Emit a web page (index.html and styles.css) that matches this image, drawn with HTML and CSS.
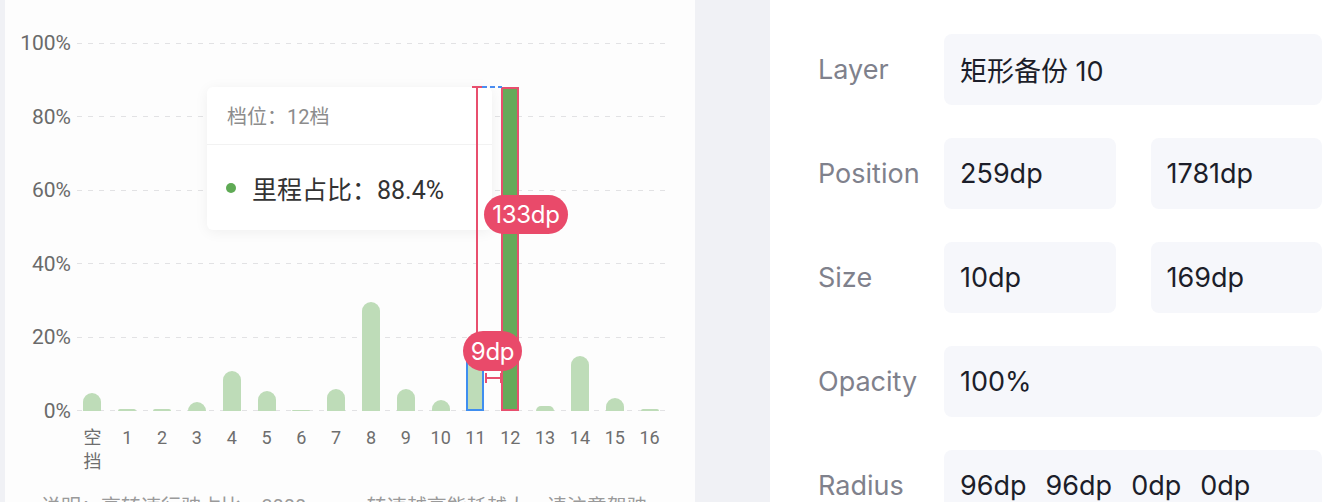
FILE: index.html
```html
<!DOCTYPE html>
<html lang="zh-CN">
<head>
<meta charset="utf-8">
<title>档位分布</title>
<link rel="stylesheet" href="styles.css">
</head>
<body>
<div class="page">
  <section class="chart-panel">
    <div class="chart-area">
      <div class="grid-lines">
        <div class="grid-row"><span class="y-label">100%</span><span class="dash"></span></div>
        <div class="grid-row"><span class="y-label">80%</span><span class="dash"></span></div>
        <div class="grid-row"><span class="y-label">60%</span><span class="dash"></span></div>
        <div class="grid-row"><span class="y-label">40%</span><span class="dash"></span></div>
        <div class="grid-row"><span class="y-label">20%</span><span class="dash"></span></div>
        <div class="grid-row"><span class="y-label">0%</span><span class="dash"></span></div>
      </div>
      <div class="bars">
        <div class="bar" style="height:18px"></div>
        <div class="bar" style="height:2px"></div>
        <div class="bar" style="height:2px"></div>
        <div class="bar" style="height:9px"></div>
        <div class="bar" style="height:40px"></div>
        <div class="bar" style="height:20px"></div>
        <div class="bar" style="height:1px"></div>
        <div class="bar" style="height:22px"></div>
        <div class="bar" style="height:109px"></div>
        <div class="bar" style="height:22px"></div>
        <div class="bar" style="height:11px"></div>
        <div class="bar bar-ref" style="height:69px"></div>
        <div class="bar bar-active" style="height:324px"></div>
        <div class="bar" style="height:5px"></div>
        <div class="bar" style="height:55px"></div>
        <div class="bar" style="height:13px"></div>
        <div class="bar" style="height:2px"></div>
      </div>

      <div class="tooltip">
        <div class="tooltip-head">档位：12档</div>
        <div class="tooltip-body"><span class="dot"></span><span>里程占比：88.4%</span></div>
      </div>

      <div class="measure-v"></div>
      <div class="measure-cap-top"></div>
      <div class="measure-ext"></div>
      <div class="measure-h"></div>
      <div class="badge badge-v">133dp</div>
      <div class="badge badge-h">9dp</div>
    </div>

    <div class="x-labels">
      <span>空<br>挡</span><span>1</span><span>2</span><span>3</span><span>4</span><span>5</span><span>6</span><span>7</span><span>8</span><span>9</span><span>10</span><span>11</span><span>12</span><span>13</span><span>14</span><span>15</span><span>16</span>
    </div>
    <p class="note">说明：高转速行驶占比 ≥ 3000 rpm，转速越高能耗越大，请注意驾驶</p>
  </section>

  <aside class="props">
    <span class="prop-label">Layer</span>
    <div class="field field-wide">矩形备份 10</div>

    <span class="prop-label">Position</span>
    <div class="field">259dp</div>
    <div class="field">1781dp</div>

    <span class="prop-label">Size</span>
    <div class="field">10dp</div>
    <div class="field">169dp</div>

    <span class="prop-label">Opacity</span>
    <div class="field field-wide">100%</div>

    <span class="prop-label">Radius</span>
    <div class="field field-wide field-radius"><span>96dp</span><span>96dp</span><span>0dp</span><span>0dp</span></div>
  </aside>
</div>
</body>
</html>
```

FILE: styles.css
```css
* { box-sizing: border-box; }

html, body {
  margin: 0;
  padding: 0;
  height: 502px;
  overflow: hidden;
  background: #f0f1f5;
  font-family: Roboto, "Noto Sans CJK SC", sans-serif;
}

.page {
  display: flex;
  height: 502px;
  padding-left: 5px;
}

/* ---------- chart panel ---------- */
.chart-panel {
  width: 690px;
  flex: none;
  background: #fdfdfd;
  padding-top: 33px;
  margin-right: 75px;
  overflow: hidden;
}

.chart-area {
  position: relative;
  display: grid;
  height: 388px;
}

.grid-lines, .bars { grid-area: 1 / 1; }

.grid-lines {
  display: flex;
  flex-direction: column;
  justify-content: space-between;
}

.grid-row {
  height: 20px;
  display: flex;
  align-items: center;
}

.y-label {
  width: 66px;
  text-align: right;
  font-size: 21px;
  line-height: 20px;
  color: #6a6a6a;
}

.dash {
  margin-left: 6px;
  width: 590px;
  height: 1px;
  background: repeating-linear-gradient(90deg, #e2e2e4 0 5px, transparent 5px 11px);
}

.bars {
  margin-left: 70px;
  width: 592px;
  display: grid;
  grid-template-columns: repeat(17, 1fr);
  align-items: end;
  padding-bottom: 10px;
}

.bar {
  width: 18px;
  justify-self: center;
  background: #bedcb8;
  border-radius: 9px 9px 0 0;
}

.bar-ref {
  border: 2px solid #3f8ef0;
  border-radius: 0;
}

.bar-active {
  background: #66aa5a;
  border: 2px solid #e84f6e;
  border-radius: 0;
}

/* tooltip */
.tooltip {
  position: absolute;
  left: 202px;
  top: 54px;
  width: 285px;
  height: 143px;
  background: #fff;
  border-radius: 6px;
  box-shadow: 0 2px 14px rgba(0, 0, 0, 0.06);
  display: flex;
  flex-direction: column;
}

.tooltip-head {
  height: 58px;
  padding: 0 0 0 20px;
  display: flex;
  align-items: center;
  font-size: 20px;
  color: #8c8c8c;
  border-bottom: 1px solid #f2f2f2;
}

.tooltip-body {
  flex: 1;
  display: flex;
  align-items: center;
  padding-left: 19px;
  gap: 16px;
  font-size: 25px;
  color: #333;
}

.dot {
  width: 10px;
  height: 10px;
  border-radius: 50%;
  background: #5faa55;
}

/* measurement overlay */
.measure-v {
  position: absolute;
  left: 471px;
  top: 54px;
  width: 2px;
  height: 255px;
  background: #e84f6e;
}

.measure-cap-top {
  position: absolute;
  left: 467px;
  top: 53px;
  width: 10px;
  height: 2px;
  background: #e84f6e;
}

.measure-ext {
  position: absolute;
  left: 477px;
  top: 53px;
  width: 20px;
  height: 2px;
  background: repeating-linear-gradient(90deg, #4a8cf0 0 5px, transparent 5px 8px);
}

.measure-h {
  position: absolute;
  left: 480px;
  top: 340px;
  width: 17px;
  height: 10px;
  border-left: 2px solid #e84f6e;
  border-right: 2px solid #e84f6e;
  background: linear-gradient(#e84f6e, #e84f6e) center / 100% 2px no-repeat;
}

.badge {
  position: absolute;
  display: flex;
  align-items: center;
  justify-content: center;
  background: #e94a6a;
  color: #fff;
  font-family: Inter, Roboto, sans-serif;
  font-size: 24px;
  letter-spacing: -0.3px;
  border-radius: 20px;
}

.badge-v {
  left: 479px;
  top: 162px;
  width: 84px;
  height: 39px;
}

.badge-h {
  left: 458px;
  top: 298px;
  width: 59px;
  height: 40px;
}

/* x labels */
.x-labels {
  margin: 5px 0 0 70px;
  width: 592px;
  display: grid;
  grid-template-columns: repeat(17, 1fr);
  text-align: center;
  font-size: 18px;
  line-height: 24px;
  color: #6e6e6e;
}

.note {
  margin: 19px 0 0 36px;
  font-size: 20px;
  line-height: 28px;
  color: #9a9a9a;
  white-space: nowrap;
}

/* ---------- properties panel ---------- */
.props {
  flex: 1;
  background: #fff;
  padding: 34px 20px 0 48px;
  display: grid;
  grid-template-columns: 91px 1fr 1fr;
  grid-auto-rows: 71px;
  column-gap: 35px;
  row-gap: 33px;
  align-content: start;
  font-family: Inter, "Noto Sans CJK SC", sans-serif;
}

.prop-label {
  align-self: center;
  font-size: 27px;
  color: #7f818c;
  white-space: nowrap;
}

.field {
  background: #f6f7fb;
  border-radius: 8px;
  display: flex;
  align-items: center;
  padding-left: 16px;
  font-size: 27px;
  color: #1c1e2a;
  white-space: nowrap;
}

.field-wide { grid-column: span 2; }

.field-radius { gap: 19px; }
```
